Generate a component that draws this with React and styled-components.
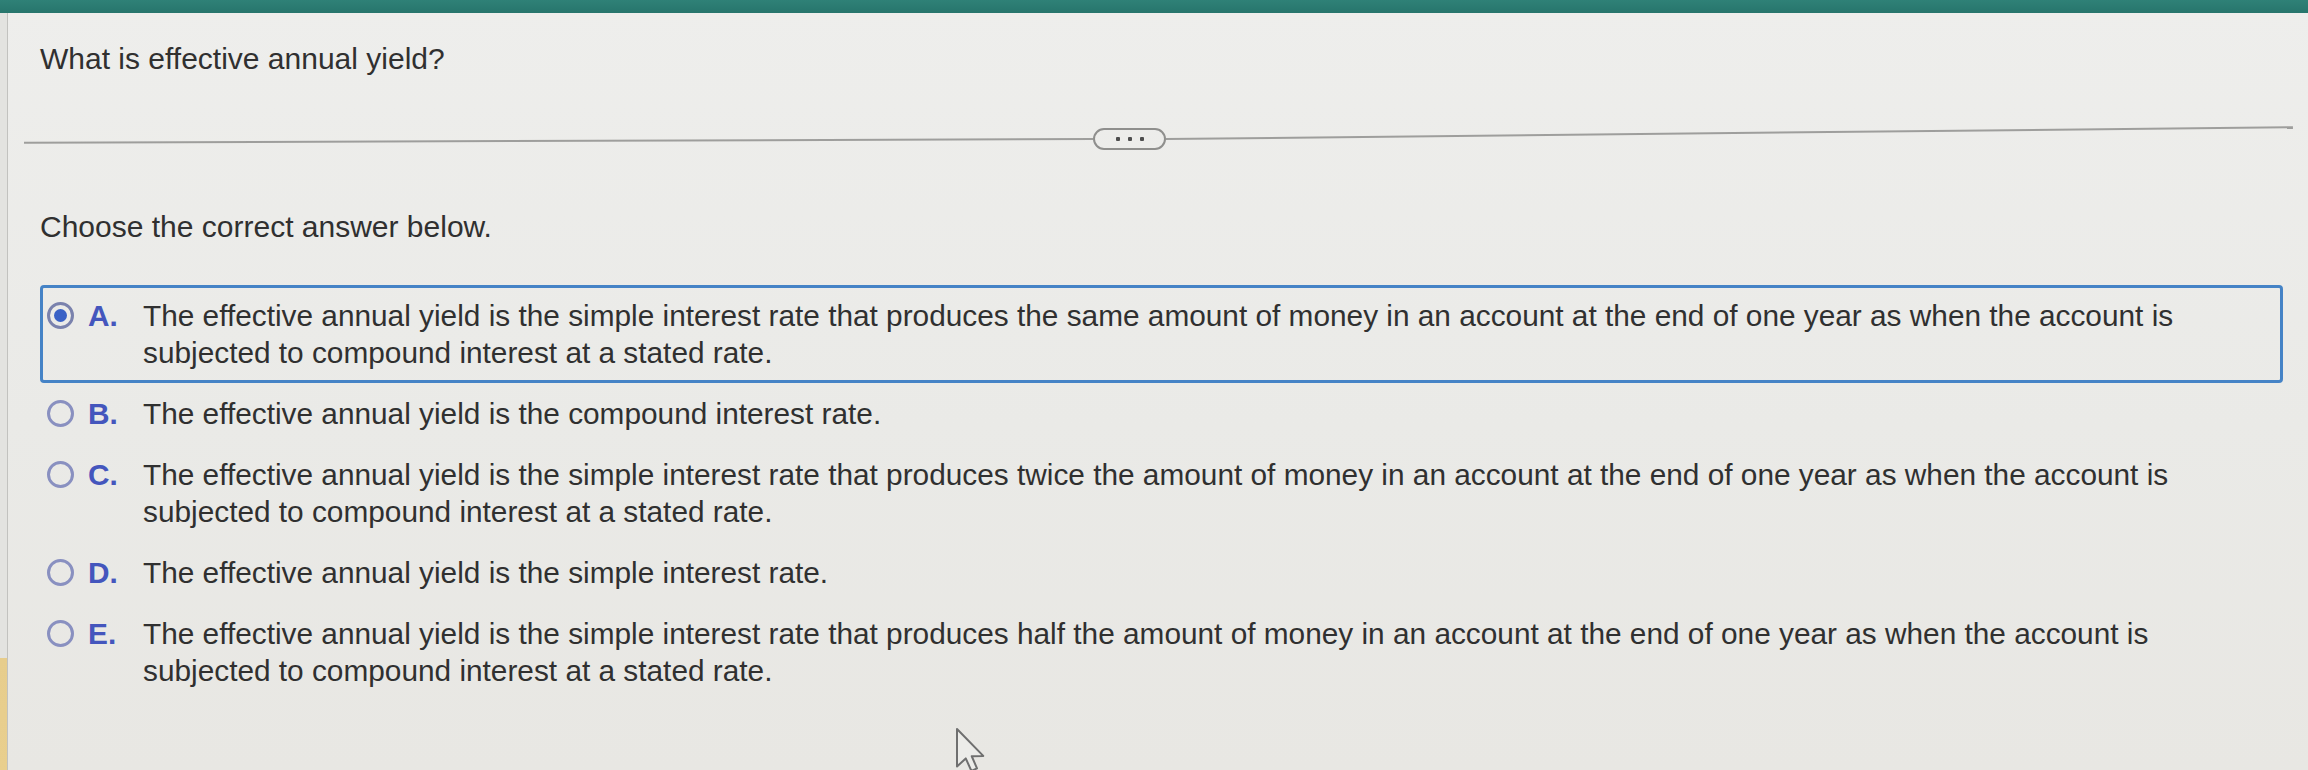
import React from "react";
import styled, { createGlobalStyle } from "styled-components";

const GlobalStyle = createGlobalStyle`
  html, body { margin: 0; padding: 0; }
  body {
    background: #e9e9e6;
    font-family: "Liberation Sans", Arial, Helvetica, sans-serif;
    color: #333;
  }
`;

const Page = styled.div`
  position: relative;
  width: 2308px;
  height: 770px;
  overflow: hidden;
  display: flex;
  flex-direction: column;
  background: linear-gradient(180deg, #eeeeec 0%, #eaeae7 55%, #e8e7e3 100%);
`;

const TopBar = styled.div`
  height: 13px;
  flex-shrink: 0;
  background: linear-gradient(180deg, #2f8177 0%, #27756c 100%);
`;

const Body = styled.div`
  flex: 1;
  display: flex;
`;

const Gutter = styled.div`
  width: 7px;
  flex-shrink: 0;
  border-right: 1px solid #c2c2bf;
  background: linear-gradient(
    180deg,
    #e3e3e0 0,
    #e3e3e0 645px,
    #e7cd8c 645px,
    #e9cf8e 100%
  );
`;

const Content = styled.div`
  flex: 1;
  padding: 0 15px 0 16px;
  display: flex;
  flex-direction: column;
`;

const Question = styled.div`
  margin: 27px 0 0 16px;
  font-size: 30px;
  line-height: 37px;
  color: #303030;
`;

const Divider = styled.div`
  display: flex;
  align-items: center;
  height: 22px;
  margin-top: 51px;
`;

const Line = styled.div`
  height: 2px;
  background: #9e9e9c;
  flex: ${(p) => (p.$grow ? "1" : `0 0 ${p.$width}px`)};
  transform: rotate(${(p) => p.$tilt}deg);
  transform-origin: ${(p) => (p.$grow ? "left center" : "right center")};
`;

const Pill = styled.div`
  box-sizing: border-box;
  width: 73px;
  height: 22px;
  flex-shrink: 0;
  border: 2px solid #8f8f8d;
  border-radius: 11px;
  display: flex;
  align-items: center;
  justify-content: center;
  gap: 8px;
`;

const Dot = styled.span`
  width: 4px;
  height: 4px;
  border-radius: 1px;
  background: #4e4e4e;
`;

const Prompt = styled.div`
  margin: 58px 0 0 16px;
  font-size: 30px;
  line-height: 37px;
  color: #303030;
`;

const Options = styled.div`
  margin: 40px 10px 0 16px;
  display: flex;
  flex-direction: column;
`;

const Option = styled.div`
  display: flex;
  align-items: flex-start;
  border: 3px solid ${(p) => (p.$selected ? "#4583c6" : "transparent")};
  border-radius: 4px;
  padding: 9px 20px 9px 3.5px;
  font-size: 29.8px;
  line-height: 37px;
`;

const Radio = styled.span`
  box-sizing: border-box;
  width: 27px;
  height: 27px;
  margin-top: 5px;
  flex-shrink: 0;
  border-radius: 50%;
  border: 3px solid ${(p) => (p.$selected ? "#7a82ad" : "#8990c0")};
  display: flex;
  align-items: center;
  justify-content: center;
`;

const RadioDot = styled.span`
  width: 13px;
  height: 13px;
  border-radius: 50%;
  background: #3a62c6;
`;

const Letter = styled.span`
  width: 55px;
  flex-shrink: 0;
  margin-left: 14.5px;
  font-weight: bold;
  color: #4456bd;
`;

const OptionText = styled.span`
  flex: 1;
  color: #303030;
`;

const Cursor = styled.svg`
  position: absolute;
  left: 955px;
  top: 727px;
  overflow: visible;
`;

const options = [
  {
    key: "A",
    text:
      "The effective annual yield is the simple interest rate that produces the same amount of money in an account at the end of one year as when the account is subjected to compound interest at a stated rate.",
    selected: true,
  },
  {
    key: "B",
    text: "The effective annual yield is the compound interest rate.",
  },
  {
    key: "C",
    text:
      "The effective annual yield is the simple interest rate that produces twice the amount of money in an account at the end of one year as when the account is subjected to compound interest at a stated rate.",
  },
  {
    key: "D",
    text: "The effective annual yield is the simple interest rate.",
  },
  {
    key: "E",
    text:
      "The effective annual yield is the simple interest rate that produces half the amount of money in an account at the end of one year as when the account is subjected to compound interest at a stated rate.",
  },
];

export default function App() {
  return (
    <>
      <GlobalStyle />
      <Page>
        <TopBar />
        <Body>
          <Gutter />
          <Content>
            <Question>What is effective annual yield?</Question>
            <Divider>
              <Line $width={1069} $tilt={-0.2} />
              <Pill>
                <Dot />
                <Dot />
                <Dot />
              </Pill>
              <Line $grow $tilt={-0.6} />
            </Divider>
            <Prompt>Choose the correct answer below.</Prompt>
            <Options>
              {options.map((o) => (
                <Option key={o.key} $selected={o.selected}>
                  <Radio $selected={o.selected}>{o.selected && <RadioDot />}</Radio>
                  <Letter>{o.key}.</Letter>
                  <OptionText>{o.text}</OptionText>
                </Option>
              ))}
            </Options>
          </Content>
        </Body>
        <Cursor width="30" height="46" viewBox="0 0 30 46">
          <path
            d="M2 2 L2 39.5 L10.75 31.4 L16.4 43.9 L22 41.4 L16.75 29.25 L28.25 28.9 Z"
            fill="#ecece9"
            stroke="#6f6f6f"
            strokeWidth="2"
            strokeLinejoin="round"
          />
        </Cursor>
      </Page>
    </>
  );
}
